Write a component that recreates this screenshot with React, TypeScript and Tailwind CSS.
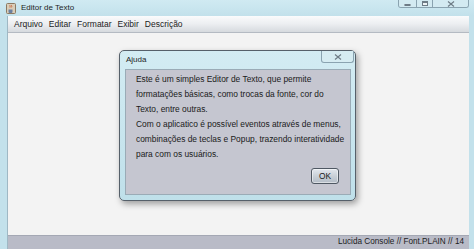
function JavaIcon() {
  return (
    <svg width="10" height="11" viewBox="0 0 10 11" className="shrink-0">
      <rect x="0.5" y="0.5" width="9" height="10" rx="1" fill="#d9cdb8" stroke="#8c7a62" />
      <path d="M2.5 6.5h4v2.2c0 .8-.6 1.3-1.3 1.3H3.8c-.7 0-1.3-.5-1.3-1.3z" fill="#6a7fa0" />
      <path d="M4 2.2c-.6.8.6 1.3 0 2.4M5.6 2c-.6.8.6 1.3 0 2.4" stroke="#c0542a" strokeWidth="0.8" fill="none" />
    </svg>
  );
}

function CloseGlyph() {
  return (
    <svg width="8" height="6" viewBox="0 0 8 6">
      <path d="M1 0.5l3 2.5 3-2.5M1 5.5l3-2.5 3 2.5" stroke="#6e7c86" strokeWidth="1.2" fill="none" />
    </svg>
  );
}

function WindowButtons() {
  return (
    <div className="ml-auto flex h-[8px] self-start overflow-hidden rounded-b-[3px] border border-t-0 border-[#8aa3b0]">
      <div className="flex w-[17px] items-end justify-center bg-[#d3eaf1] pb-[1px]">
        <div className="h-[2px] w-[7px] rounded-[1px] border border-[#6e7c86] bg-[#eef4f6]" />
      </div>
      <div className="flex w-[16px] items-center justify-center border-l border-[#8aa3b0] bg-[#d3eaf1]">
        <div className="h-[5px] w-[6px] border border-[#6e7c86] border-t-2 bg-[#eef4f6]" />
      </div>
      <div className="flex w-[36px] items-center justify-center border-l border-[#8aa3b0] bg-[#d3eaf1]">
        <CloseGlyph />
      </div>
    </div>
  );
}

const menus = ["Arquivo", "Editar", "Formatar", "Exibir", "Descrição"];

const lines = [
  "Este é um simples Editor de Texto, que permite",
  "formatações básicas, como trocas da fonte, cor do",
  "Texto, entre outras.",
  "Com o aplicatico é possível eventos através de menus,",
  "combinações de teclas e Popup, trazendo interatividade",
  "para com os usuários.",
];

export default function App() {
  return (
    <div className="relative flex h-[249px] w-[474px] flex-col overflow-hidden bg-[#c3e1eb] font-['Liberation_Sans',Arial,sans-serif] text-[#1c1c1c]">
      {/* title bar */}
      <div className="flex h-[16px] items-center bg-gradient-to-b from-[#d0eaf2] to-[#c2e1eb] pl-[6px] pr-[5px]">
        <JavaIcon />
        <span className="ml-[5px] text-[8px] leading-none text-[#1e1e1e]">Editor de Texto</span>
        <WindowButtons />
      </div>

      {/* window body */}
      <div className="ml-[7px] mr-[5px] flex flex-1 flex-col border-l border-[#9fb8c4]">
        <div className="flex h-[16px] items-center bg-gradient-to-b from-[#fafbfc] via-[#eceef1] to-[#d6dade] pl-[3px] text-[8.5px] leading-none">
          {menus.map((m) => (
            <span key={m} className="px-[3px]">{m}</span>
          ))}
        </div>
        <div className="relative flex-1 border-t border-[#b4bac2] bg-[#f3f3f3]">
          {/* dialog */}
          <div className="absolute left-[111px] top-[17px] flex h-[151px] w-[237px] flex-col rounded-[5px] border border-[#56606a] bg-gradient-to-b from-[#d3ecf3] to-[#bfe0ea] shadow-[2px_3px_6px_rgba(0,0,0,0.35)]">
            <div className="relative flex h-[18px] shrink-0 items-center pl-[6px]">
              <span className="text-[8px] leading-none text-[#1e1e1e]">Ajuda</span>
              <div className="absolute right-[1px] top-0 flex h-[12px] w-[33px] items-center justify-center rounded-b-[3px] border border-t-0 border-[#8aa3b0] bg-[#d6ecf2]">
                <CloseGlyph />
              </div>
            </div>
            <div className="mb-[5px] ml-[5px] mr-[4px] flex flex-1 flex-col whitespace-nowrap border border-[#9aabb6] bg-[#c5c6d0] pl-[10px] pt-[2px] text-[8.4px] leading-[15px] text-[#1a1a1a]">
              {lines.map((l) => (
                <p key={l}>{l}</p>
              ))}
              <div className="mt-[6px] flex justify-end pr-[11px]">
                <button className="flex h-[16px] w-[28px] items-center justify-center rounded-[3px] border border-[#4f5863] bg-gradient-to-b from-[#e3e8ee] via-[#c9d0d8] to-[#b3bcc6] text-[8.4px] leading-none text-[#1a1a1a] shadow-[inset_0_0_0_1px_rgba(255,255,255,0.5)]">
                  OK
                </button>
              </div>
            </div>
          </div>
        </div>
        <div className="flex h-[14px] shrink-0 items-center justify-end border-t border-[#a4a8b4] bg-[#b9bbc7] pr-[5px] text-[8.2px] leading-none text-[#1c1c1c]">
          Lucida Console // Font.PLAIN // 14
        </div>
      </div>
    </div>
  );
}
